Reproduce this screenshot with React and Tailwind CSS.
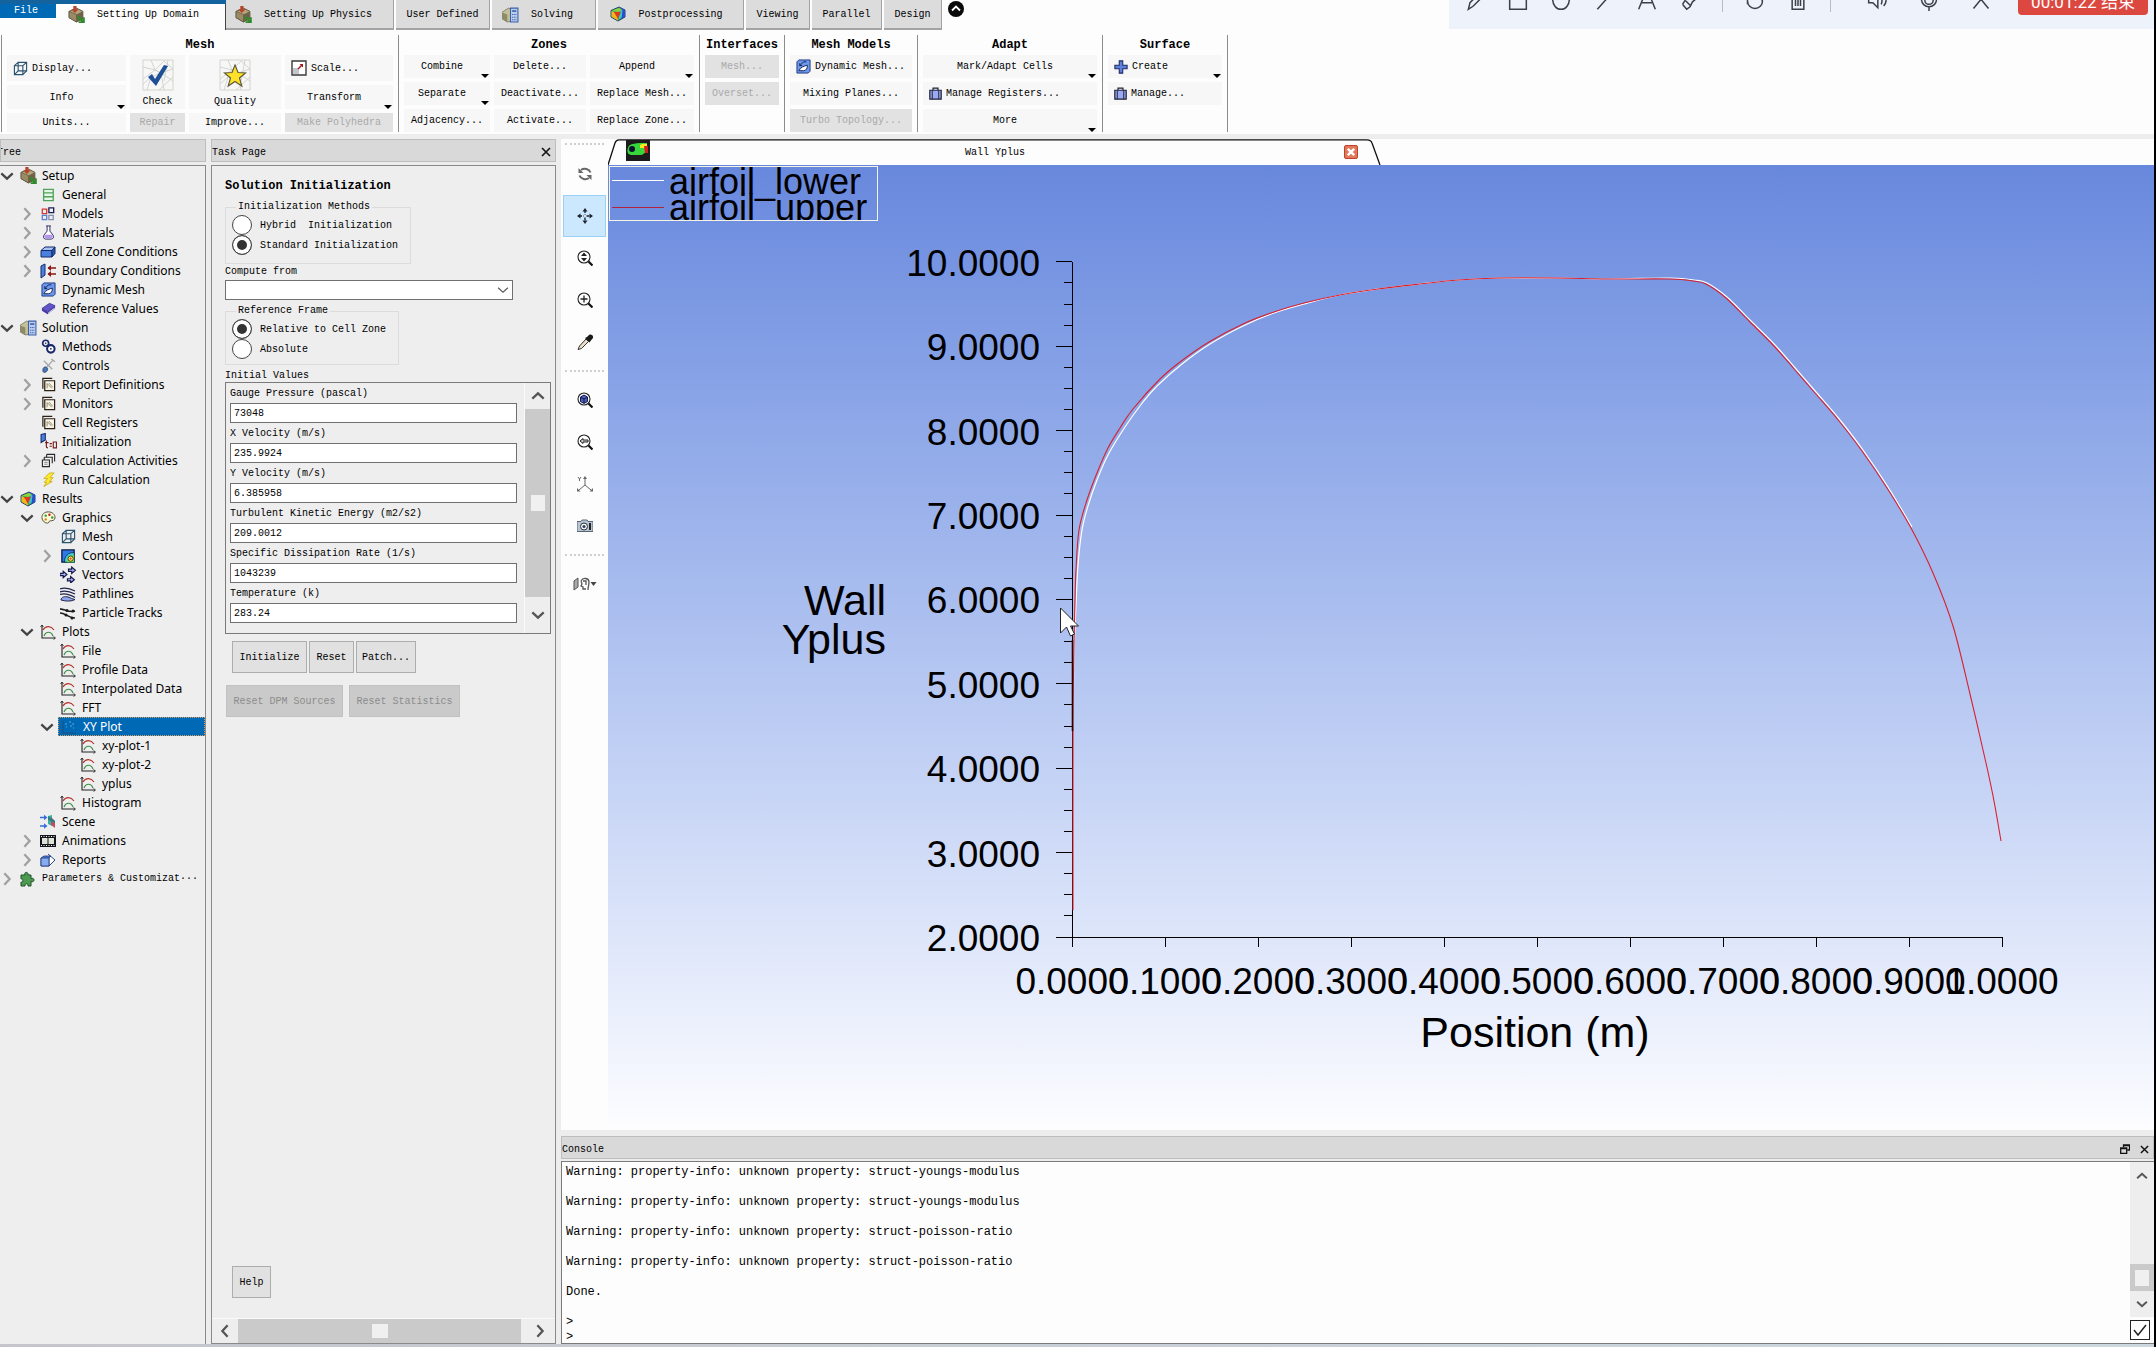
import React from "react";

const MONO = "font-['Liberation_Mono',monospace]";

/* ---------- icons ---------- */

function Svg({ size = 16, box = 16, className = "", children }) {
  return (
    <svg width={size} height={size} viewBox={`0 0 ${box} ${box}`} fill="none" className={`shrink-0 ${className}`} aria-hidden="true">
      {children}
    </svg>
  );
}

const SetupIcon = ({ size = 17 }) => (
  <Svg size={size}>
    <path d="M1 5l7-3 6 3v7l-6 3-7-4z" fill="#b5a47c" stroke="#4b4534" strokeWidth=".8" />
    <path d="M8 8l6-3v7l-6 3z" fill="#6e6347" />
    <path d="M1 5l7 3v7l-7-4z" fill="#9a8b66" stroke="#4b4534" strokeWidth=".5" />
    <path d="M5 0h3v3h2L6.500 6.500 3 3h2z" fill="#b5442c" />
    <path d="M10 9l4 4v-2.500h1.800V16H10v-1.600h2.300L8.800 11z" fill="#2f8a2c" />
  </Svg>
);
const SolutionIcon = ({ size = 17 }) => (
  <Svg size={size}>
    <path d="M0 6l6-4 5 2v10l-6 1-5-3z" fill="#c3c199" stroke="#6d6c55" strokeWidth=".7" />
    <path d="M0 6l5 2v7l-5-3z" fill="#8d8b68" />
    <path d="M8 2h7v13H8z" fill="#b9cdee" stroke="#3c5fa8" />
    <path d="M9.500 4h4v1.500h-4z" fill="#3c5fa8" />
    <path d="M9.500 8h4M9.500 10.500h4M9.500 13h4" stroke="#3c5fa8" strokeDasharray="1 .6" />
  </Svg>
);
const ResultsIcon = ({ size = 16 }) => (
  <Svg size={size}>
    <path d="M1 4.500L9 1l6 3v7l-7 4-7-4z" fill="#2fb457" stroke="#1a2f66" strokeWidth=".9" />
    <path d="M9 1l6 3v7l-4 2.300L12 5z" fill="#2450cf" />
    <path d="M8.500 3l4 1.500-1 7L9 13z" fill="#38c8c8" />
    <path d="M1.500 5L8 8v6.500l-6.500-3.800z" fill="#f1b51e" />
    <path d="M4 6l7-.5L8 13z" fill="#dc3a1d" />
    <path d="M2 4.500L9 2l3 1.500L8 6z" fill="#8ed23c" />
  </Svg>
);
const GeneralIcon = () => (
  <Svg size={14}>
    <path d="M3 1.500h11v13H3zM3 5.500h11M3 10h11" stroke="#4fa35a" strokeWidth="1.500" fill="#e6f5e7" />
  </Svg>
);
const ModelsIcon = () => (
  <Svg size={14}>
    <path d="M1.500 2.500h5v5h-5z" stroke="#d43a35" strokeWidth="1.500" />
    <path d="M9 1h5.500v5.500H9z" stroke="#1c1c55" strokeWidth="1.500" />
    <path d="M1.500 9.500h5v5h-5z" stroke="#5d7fd0" strokeWidth="1.500" />
    <path d="M9 9.500h5v5H9z" stroke="#8a8fb0" strokeWidth="1.500" />
  </Svg>
);
const MaterialsIcon = () => (
  <Svg size={15}>
    <path d="M5.500 1h5M6.500 1v5.500L3 11c-1 2 0 4 2 4h6c2 0 3-2 2-4L9.500 6.500V1" fill="#fff" stroke="#24245f" />
    <path d="M4 10.500h8c1 2 .5 3.500-1 3.500H5c-1.500 0-2-1.500-1-3.500z" fill="#b497ec" />
  </Svg>
);
const CellZoneIcon = () => (
  <Svg size={16}>
    <path d="M1 6.500L5 3h10l-3 3.500z" fill="#a5c3f5" stroke="#142a6b" />
    <path d="M1 6.500h11V13H1z" fill="#4b80dd" stroke="#142a6b" />
    <path d="M12 6.500L15 3v6.500L12 13z" fill="#2c56b0" stroke="#142a6b" />
  </Svg>
);
const BoundaryIcon = () => (
  <Svg size={16}>
    <path d="M1 3l4-2v11l-4 3z" fill="#4b80dd" stroke="#142a6b" />
    <path d="M8 5h8M8 11h8" stroke="#8a1616" strokeWidth="1.500" />
    <path d="M11 2L7.500 5 11 8zM11 8l-3.500 3 3.500 3z" fill="#8a1616" />
  </Svg>
);
const DynMeshIcon = () => (
  <Svg size={15}>
    <path d="M1 3l2-2h12v12l-2 2H1z" fill="#6d97ec" stroke="#1b357f" />
    <path d="M4 7l4-4h3M4 7V4.500M4 7h2.500" stroke="#102050" />
    <path d="M3 12.500C5 8.500 8 8 12 6.500c.5 3-1 6-4 6z" fill="#fff" stroke="#102050" />
  </Svg>
);
const BookIcon = () => (
  <Svg size={15}>
    <path d="M1 8l8-5.500L15 5l-8 6.500z" fill="#6355c8" stroke="#33308c" strokeWidth=".8" />
    <path d="M1 8l6 3.500L15 5v3l-8 6-6-3.500z" fill="#4438a4" />
    <path d="M7.500 12.500l7-5.500v1.200l-7 5.300z" fill="#e8e8f4" />
  </Svg>
);
const GearsIcon = () => (
  <Svg size={15}>
    <circle cx="5" cy="4.500" r="3.200" stroke="#18286b" strokeWidth="1.800" />
    <circle cx="10.500" cy="10.500" r="4" stroke="#18286b" strokeWidth="2.200" fill="#fff" />
    <circle cx="10.500" cy="10.500" r="1" fill="#18286b" />
    <circle cx="5" cy="4.500" r=".8" fill="#18286b" />
  </Svg>
);
const ControlsIcon = () => (
  <Svg size={15}>
    <path d="M3 3l9 9M13 2L6 10M11 1l4 3" stroke="#a5a9ad" strokeWidth="1.500" />
    <path d="M2 13c0-3 2-4 4-3s1 4-1 5-3 0-3-2z" fill="#4c79b5" stroke="#2c4a78" />
  </Svg>
);
const ReportDefIcon = () => (
  <Svg size={15}>
    <path d="M2 12.500V1.500h10" stroke="#2b2114" strokeWidth="1.300" />
    <path d="M4 4h10.500v10.500H4z" stroke="#2b2114" strokeWidth="1.300" fill="#f8f5ea" />
    <path d="M6.500 12V7l5 5M8.500 6.500l4 4.500" stroke="#8f855f" />
  </Svg>
);
const InitIcon = () => (
  <Svg size={17}>
    <path d="M1 1.500L5 .5v6L1 9z" fill="#4b80dd" stroke="#142a6b" />
    <path d="M6 7v6c0 1 .8 1 1.500 1M4.800 9H8M9 10h2.200M9 12.500h2.200M12.500 8.500h3V14h-3z" stroke="#7b1d1d" strokeWidth="1.100" />
  </Svg>
);
const CalcActIcon = () => (
  <Svg size={15}>
    <path d="M6 1.500h8.500V9M6 1.500V4M3.500 4.500H12V11M3.500 4.500V7M1.500 7.500H9v7H1.500z" stroke="#2b2b2b" strokeWidth="1.200" />
    <path d="M3.500 10h3.500M3.500 12h3.500" stroke="#8a8a8a" />
  </Svg>
);
const BoltIcon = () => (
  <Svg size={15}>
    <path d="M9 1h5L9.500 6H13l-4 4h3L3 15.500l3-4.500H3.500L7 7H3z" fill="#ffe92e" stroke="#b59b00" strokeWidth=".7" />
  </Svg>
);
const PaletteIcon = () => (
  <Svg size={15}>
    <path d="M8 2C3.500 2 1 4.500 1 8s3 6 6 6c2 0 1-2.500 3-2.500S15 11 15 8s-3-6-7-6z" fill="#fdfbd7" stroke="#4b4433" />
    <circle cx="5" cy="6" r="1.300" fill="#2f9a3a" />
    <circle cx="9" cy="5" r="1.300" fill="#c22222" />
    <circle cx="12" cy="8" r="1.300" fill="#2a9a2a" />
    <circle cx="5" cy="10" r="1.300" fill="#d8861a" />
  </Svg>
);
const MeshIcon = ({ size = 15 }) => (
  <Svg size={size}>
    <path d="M1.500 5h9v9.500h-9zM5.500 1.500h9v9h-9zM1.500 5l4-3.500M10.500 5l4-3.500M10.500 14.500l4-4M1.500 14.500l4-4" stroke="#2a5470" strokeWidth="1.200" />
  </Svg>
);
const ContoursIcon = () => (
  <Svg size={14}>
    <path d="M1 1h14v14H1z" fill="#2f78e8" stroke="#101a40" strokeWidth="1.500" />
    <path d="M4 15C4 8 8 4 15 4v11z" fill="#3fd2d8" stroke="#101a40" strokeWidth=".8" />
    <path d="M6.500 15c0-5 3-8 8.500-8v8z" fill="#70d64a" />
    <circle cx="11" cy="11" r="3" fill="#fff27a" stroke="#3a2a00" />
    <circle cx="11" cy="11" r="1.200" fill="#e1401b" />
  </Svg>
);
const VectorsIcon = () => (
  <Svg size={17}>
    <path d="M0 7h3V5l3.500 3L3 11V9H0zM8 3h3V1l3.500 3L11 7V5H8zM7 12h3v-2l3.500 3-3.500 3v-2H7z" fill="#a9b6ef" stroke="#17174c" strokeWidth="1.100" />
  </Svg>
);
const PathlinesIcon = () => (
  <Svg size={16}>
    <path d="M0 3c5-2 9-1 15 2M0 6c5-2 9-1 15 2M0 8.500c4-1.500 9-.5 15 3" stroke="#20244c" strokeWidth="1.200" />
    <path d="M1 14c0-3 4-4 7-3s4 2 7 2.500c-3 2-9 2-14 .5z" fill="#90a5ea" stroke="#20244c" />
  </Svg>
);
const TracksIcon = () => (
  <Svg size={16}>
    <path d="M0 4c5 0 9 4 15 2M0 8c5 0 9 5 15 5M0 4l5 1" stroke="#1a1a1a" strokeWidth="1.400" />
    <circle cx="7" cy="5.500" r="1.500" fill="#1a1a1a" />
    <circle cx="13" cy="6" r="1.500" fill="#1a1a1a" />
    <circle cx="6" cy="10" r="1.500" fill="#1a1a1a" />
    <circle cx="12" cy="13" r="1.500" fill="#1a1a1a" />
  </Svg>
);
const PlotIcon = () => (
  <Svg size={16}>
    <path d="M2 1v13h13" stroke="#222" strokeWidth="1.100" />
    <path d="M.5 3L2 1l1.500 2M13.500 12.500L15.500 14l-2 1.500" stroke="#222" strokeWidth=".8" />
    <path d="M3 6c3-5 8-4 11 0" stroke="#b5352c" strokeWidth="1.200" />
    <path d="M4 12c2-5 7-5 9 0" stroke="#3c8f45" strokeWidth="1.200" />
  </Svg>
);
const PlotSelectedIcon = () => (
  <Svg size={16}>
    <path d="M2 2v12h13" stroke="#1f4f80" strokeWidth="1.100" />
    <path d="M4 5h2M8 3h2M11 5h2M5 8h1M9 7h2M12 9h1" stroke="#3f93cf" strokeWidth="1.500" />
  </Svg>
);
const SceneIcon = () => (
  <Svg size={16}>
    <path d="M0 3.500h5M0 12h5" stroke="#3670d8" strokeWidth="1.600" />
    <path d="M4 .8L7.500 3.500 4 6.200zM4 9.300L7.500 12 4 14.700z" fill="#3670d8" />
    <path d="M8 2l4-1v11l-4-2z" fill="#33b3a6" />
    <path d="M11 3l4 4v7l-4-3z" fill="#c24b63" />
    <path d="M8 2l7 5v2L8 6z" fill="#2d7f83" />
  </Svg>
);
const FilmIcon = () => (
  <Svg size={16}>
    <path d="M0 2h16v12H0z" fill="#15151d" />
    <path d="M2 5h5.500v6H2zM8.500 5H14v6H8.500z" fill="#dfe6d9" />
    <path d="M1 3.500h14M1 12.500h14" stroke="#fff" strokeDasharray="1 1.500" />
  </Svg>
);
const ReportsIcon = () => (
  <Svg size={16}>
    <path d="M8 2l7 6-6 6" fill="#fff" stroke="#30457f" />
    <path d="M1 6l3-2h7l-2 2v8H1z" fill="#4b80dd" stroke="#1b3475" strokeWidth=".8" />
    <path d="M1 6h8v8H1z" fill="#87abf0" stroke="#1b3475" strokeWidth=".8" />
  </Svg>
);
const PuzzleIcon = () => (
  <Svg size={16}>
    <path d="M1 4h4c-1.500-3.500 4-3.500 3 0h3v3.500c4-1.500 4 4.500 0 3V15H8c.5-3-3.500-3-3 0H1v-4c2.500 1 2.500-4 0-3z" fill="#4d9a52" stroke="#1f5225" />
  </Svg>
);
const ScaleIcon = () => (
  <Svg size={16}>
    <path d="M1 1h14v14H1z" fill="#fff" stroke="#3a3a3a" strokeWidth="1.400" />
    <path d="M2 8h6v6H2z" fill="#c4c4cc" />
    <path d="M7 9l4-4" stroke="#a01818" strokeWidth="1.500" />
    <path d="M8.500 4H12v3.500z" fill="#a01818" />
  </Svg>
);
const BagIcon = () => (
  <Svg size={13}>
    <path d="M5 4V1.500h6V4" stroke="#1d2238" strokeWidth="1.500" />
    <path d="M1 4h14v11H1z" fill="#9ba9f0" stroke="#1d2238" strokeWidth="1.500" />
    <path d="M4 4v11M12 4v11" stroke="#1d2238" strokeWidth="1.200" />
  </Svg>
);
const PlusIcon = () => (
  <Svg size={14}>
    <path d="M6 1h4v5h5v4h-5v5H6v-5H1V6h5z" fill="#5f7fdc" stroke="#1d2b60" strokeWidth="1.200" />
  </Svg>
);
const MeshBack = () => (
  <path d="M1 1h30v30H1zM1 8l12 3L9 1M13 11l9-9 9 8-12 4zM1 20l12-9 6 3 12 8M5 31l4-13 10-4 3 17M1 25l8-7M31 18L17 31M26 1l-4 21" stroke="#cfcfca" strokeWidth=".9" />
);
const CheckIcon = () => (
  <Svg size={32} box={32}>
    <MeshBack />
    <path d="M6 18l4-3 3 5L22 6l4 1-12 20z" fill="#1f4f96" />
  </Svg>
);
const QualityIcon = () => (
  <Svg size={32} box={32}>
    <MeshBack />
    <path d="M16 6l3 7.500 7.500.5-6 5 2.300 8L16 22.500 9.200 27l2.300-8-6-5 7.500-.5z" fill="#ffe228" stroke="#5e5a3a" strokeWidth="1.200" />
  </Svg>
);
const CloseGlyph = ({ size = 10 }) => (
  <Svg size={size} box={10}>
    <path d="M1 1l8 8M9 1L1 9" stroke="#111" strokeWidth="1.600" />
  </Svg>
);
function Chevron({ dir, color = "#555", size = 14, weight = 2.6 }) {
  const d = {
    right: "M5 1.500L11 8l-6 6.500",
    left: "M11 1.500L5 8l6 6.500",
    down: "M1.500 5L8 11l6.500-6",
    up: "M1.500 11L8 5l6.500 6",
  }[dir];
  return (
    <Svg size={size}>
      <path d={d} stroke={color} strokeWidth={weight} />
    </Svg>
  );
}

/* ---------- ribbon ---------- */

function Tab({ icon, label, width }) {
  return (
    <button className={`flex h-[30px] shrink-0 items-center justify-center gap-3 border-r border-b-2 border-[#a3a3a3] bg-[#dcdcdc] ${width}`}>
      {icon}
      {label}
    </button>
  );
}

function RBtn({ icon, label, caret, disabled, className = "h-[23px]", left }) {
  return (
    <button
      disabled={disabled}
      className={`relative flex w-full items-center gap-1 whitespace-nowrap ${left ? "justify-start pl-1.5" : "justify-center"} ${disabled ? "bg-[#e2e2e3] text-[#a9a9a9]" : "bg-[#f7f7f7] text-black"} ${className}`}
    >
      {icon}
      <span className={caret && !left ? "pr-2.5" : ""}>{label}</span>
      {caret && (
        <span className="absolute right-[1px] bottom-0 border-x-4 border-t-4 border-x-transparent border-t-black" />
      )}
    </button>
  );
}

function Group({ title, children }) {
  return (
    <section className="flex h-[97px] shrink-0 flex-col border-r border-[#8c8c8c] px-[5px]">
      <h2 className="h-5 text-center text-[12px] leading-5 font-bold">{title}</h2>
      <div className="flex gap-1">{children}</div>
    </section>
  );
}

const Col = ({ width, children }) => <div className={`flex flex-col gap-1 ${width}`}>{children}</div>;

function Ribbon() {
  return (
    <header className="relative h-[134px] shrink-0 bg-[#fdfdfd]">
      <nav className="flex h-[30px] items-start gap-0.5">
        <div className="-mr-0.5 flex items-start border-t-4 border-[#14639f] bg-[#fdfdfd]">
          <button className="h-[14px] w-[56px] bg-[#0069b5] pr-1 text-[10px] leading-[10px] text-white">File</button>
          <button className="flex h-[26px] w-[170px] items-center gap-3 border-r border-[#444] pb-1.5 pl-3">
            <SetupIcon />
            Setting Up Domain
          </button>
        </div>
        <Tab icon={<SetupIcon />} label="Setting Up Physics" width="w-[168px] pr-3" />
        <Tab label="User Defined" width="w-[94px]" />
        <Tab icon={<SolutionIcon />} label="Solving" width="w-[104px] pr-3" />
        <Tab icon={<ResultsIcon />} label="Postprocessing" width="w-[146px] pr-2" />
        <Tab label="Viewing" width="w-[64px]" />
        <Tab label="Parallel" width="w-[70px]" />
        <Tab label="Design" width="w-[58px]" />
        <button aria-label="Collapse ribbon" className="ml-1 pt-px">
          <Svg size={16}>
            <circle cx="8" cy="8" r="8" fill="#0a0a0a" />
            <path d="M4 9.500l4-4 4 4" stroke="#fff" strokeWidth="1.800" />
          </Svg>
        </button>
      </nav>

      <div className="mt-[5px] ml-px flex border-l border-[#8c8c8c]">
        <Group title="Mesh">
          <Col width="w-[119px]">
            <RBtn left icon={<MeshIcon />} label="Display..." className="h-[26px]" />
            <RBtn caret label="Info" className="h-[24px]" />
            <RBtn label="Units..." className="h-[19px]" />
          </Col>
          <Col width="w-[55px]">
            <button className="flex h-[54px] flex-col items-center justify-between bg-[#f7f7f7] pt-1">
              <CheckIcon />
              <span>Check</span>
            </button>
            <RBtn disabled label="Repair" className="h-[19px]" />
          </Col>
          <Col width="w-[92px]">
            <button className="flex h-[54px] flex-col items-center justify-between bg-[#f7f7f7] pt-1">
              <QualityIcon />
              <span>Quality</span>
            </button>
            <RBtn label="Improve..." className="h-[19px]" />
          </Col>
          <Col width="w-[108px]">
            <RBtn left icon={<ScaleIcon />} label="Scale..." className="h-[26px]" />
            <RBtn caret label="Transform" className="h-[24px]" />
            <RBtn disabled label="Make Polyhedra" className="h-[19px]" />
          </Col>
        </Group>
        <Group title="Zones">
          <Col width="w-[86px]">
            <RBtn caret label="Combine" />
            <RBtn caret label="Separate" />
            <RBtn label="Adjacency..." />
          </Col>
          <Col width="w-[92px]">
            <RBtn label="Delete..." />
            <RBtn label="Deactivate..." />
            <RBtn label="Activate..." />
          </Col>
          <Col width="w-[104px]">
            <RBtn caret label="Append" />
            <RBtn label="Replace Mesh..." />
            <RBtn label="Replace Zone..." />
          </Col>
        </Group>
        <Group title="Interfaces">
          <Col width="w-[74px]">
            <RBtn disabled label="Mesh..." />
            <RBtn disabled label="Overset..." />
          </Col>
        </Group>
        <Group title="Mesh Models">
          <Col width="w-[122px]">
            <RBtn left icon={<DynMeshIcon />} label="Dynamic Mesh..." />
            <RBtn label="Mixing Planes..." />
            <RBtn disabled label="Turbo Topology..." />
          </Col>
        </Group>
        <Group title="Adapt">
          <Col width="w-[174px]">
            <RBtn caret label="Mark/Adapt Cells" />
            <RBtn left icon={<BagIcon />} label="Manage Registers..." />
            <RBtn caret label="More" />
          </Col>
        </Group>
        <Group title="Surface">
          <Col width="w-[114px]">
            <RBtn left caret icon={<PlusIcon />} label="Create" />
            <RBtn left icon={<BagIcon />} label="Manage..." />
          </Col>
        </Group>
      </div>

      <RecorderBar />
    </header>
  );
}

/* Floating annotation bar of the screen recorder, partly above the window edge. */
function RecorderBar() {
  const tools = [
    ["Pen", "M4 20l2-8L18 0l4 4L10 16z"],
    ["Rectangle", "M2 0v20h20V0"],
    ["Ellipse", "M2 8a10 12 0 0 0 20 0V0M2 8V0"],
    ["Arrow", "M4 20L20 2V0M12 4L20 0"],
    ["Text", "M2 20L10 0h4l8 20M6 12h12"],
    ["Marker", "M3 14l5 6 4-3 3-6 6-5M3 14l4-6 6-6M7 10l6 6"],
  ];
  const after = [
    ["Undo", "M3 10a9 9 0 1 0 18 0L18 4M3 14V7"],
    ["Delete", "M5 2v18h14V2M9 6v10M12 6v10M15 6v10"],
  ];
  const last = [
    ["Speaker", "M2 8v4h5l6 6V0M17 6a9 9 0 0 1 0 8M21 4a9 9 0 0 1-1 12"],
    ["Microphone", "M7 0v9a5 5 0 0 0 10 0V0M3 8a9 9 0 0 0 18 0M12 17v5"],
    ["Collapse", "M3 19L12 8l9 11"],
  ];
  const tool = ([name, d]) => (
    <button key={name} aria-label={name} className="h-[12px] w-5">
      <svg width="20" height="12" viewBox="0 9 24 14" fill="none" aria-hidden="true">
        <path d={d} stroke="#3a4048" strokeWidth="1.800" />
      </svg>
    </button>
  );
  return (
    <div className="absolute top-0 right-0 flex h-[29px] w-[705px] items-start bg-[#eef2fa] pr-1.5 pl-4 text-[#333]">
      <div className="flex gap-[23px]">{tools.map(tool)}</div>
      <span className="mx-[22px] h-3 w-px bg-[#bbb]" />
      <div className="flex gap-[23px]">{after.map(tool)}</div>
      <span className="mr-9 ml-[22px] h-3 w-px bg-[#bbb]" />
      <div className="flex gap-8">{last.map(tool)}</div>
      <button className="ml-auto h-[15px] w-[130px] overflow-hidden rounded-b bg-[#dc4840] font-['Roboto','Noto_Sans_CJK_SC',sans-serif] text-[17px] text-white">
        <span className="-mt-3 block leading-4">00:01:22 结束</span>
      </button>
    </div>
  );
}

/* ---------- tree ---------- */

const TREE = [
  [0, "down", SetupIcon, "Setup"],
  [1, "", GeneralIcon, "General"],
  [1, "right", ModelsIcon, "Models"],
  [1, "right", MaterialsIcon, "Materials"],
  [1, "right", CellZoneIcon, "Cell Zone Conditions"],
  [1, "right", BoundaryIcon, "Boundary Conditions"],
  [1, "", DynMeshIcon, "Dynamic Mesh"],
  [1, "", BookIcon, "Reference Values"],
  [0, "down", SolutionIcon, "Solution"],
  [1, "", GearsIcon, "Methods"],
  [1, "", ControlsIcon, "Controls"],
  [1, "right", ReportDefIcon, "Report Definitions"],
  [1, "right", ReportDefIcon, "Monitors"],
  [1, "", ReportDefIcon, "Cell Registers"],
  [1, "", InitIcon, "Initialization"],
  [1, "right", CalcActIcon, "Calculation Activities"],
  [1, "", BoltIcon, "Run Calculation"],
  [0, "down", ResultsIcon, "Results"],
  [1, "down", PaletteIcon, "Graphics"],
  [2, "", MeshIcon, "Mesh"],
  [2, "right", ContoursIcon, "Contours"],
  [2, "", VectorsIcon, "Vectors"],
  [2, "", PathlinesIcon, "Pathlines"],
  [2, "", TracksIcon, "Particle Tracks"],
  [1, "down", PlotIcon, "Plots"],
  [2, "", PlotIcon, "File"],
  [2, "", PlotIcon, "Profile Data"],
  [2, "", PlotIcon, "Interpolated Data"],
  [2, "", PlotIcon, "FFT"],
  [2, "down", PlotSelectedIcon, "XY Plot"],
  [3, "", PlotIcon, "xy-plot-1"],
  [3, "", PlotIcon, "xy-plot-2"],
  [3, "", PlotIcon, "yplus"],
  [2, "", PlotIcon, "Histogram"],
  [1, "", SceneIcon, "Scene"],
  [1, "right", FilmIcon, "Animations"],
  [1, "right", ReportsIcon, "Reports"],
  [0, "right", PuzzleIcon, "Parameters & Customizat···"],
];
const INDENT = ["pl-0", "pl-5", "pl-10", "pl-[60px]"];

function TreePanel() {
  return (
    <aside className="flex w-[206px] shrink-0 flex-col">
      <PanelTitle title="Tree" cut />
      <ul className="mt-[3px] flex-1 border-t border-r border-[#8a8a8a] bg-[#eeeeee] font-['Noto_Sans',sans-serif] text-[12px]">
        {TREE.map(([depth, arrow, Icon, label], i) => {
          const selected = label === "XY Plot";
          const mono = i === TREE.length - 1;
          return (
            <li key={i} className={`flex h-[19px] items-center ${INDENT[depth]}`}>
              <span className="w-[18px] shrink-0">
                {arrow && <Chevron dir={arrow} color={arrow === "down" ? "#444" : "#a0a0a0"} />}
              </span>
              <span className={`flex h-[19px] flex-1 items-center gap-1 ${selected ? "border border-dotted border-[#d89a5a] bg-[#0069b5] text-white" : ""}`}>
                <span className="flex w-5 justify-center"><Icon /></span>
                <span className={`whitespace-nowrap ${mono ? "font-['Liberation_Mono',monospace] text-[10px]" : ""}`}>{label}</span>
              </span>
            </li>
          );
        })}
      </ul>
    </aside>
  );
}

function PanelTitle({ title, cut, children }) {
  return (
    <div className="flex h-[23px] shrink-0 items-center justify-between overflow-hidden border border-[#bdbdbd] bg-[#d9d9d9] pt-[3px] pr-1">
      <h2 className={cut ? "-ml-1" : ""}>{title}</h2>
      {children}
    </div>
  );
}

/* ---------- task page ---------- */

function Radio({ name, label, checked }) {
  return (
    <label className="flex h-5 items-center gap-2 whitespace-pre">
      <input
        type="radio"
        name={name}
        defaultChecked={checked}
        className="size-5 appearance-none rounded-full border border-[#444] bg-white checked:bg-[#333] checked:shadow-[inset_0_0_0_4px_white]"
      />
      {label}
    </label>
  );
}

const VALUES = [
  ["Gauge Pressure (pascal)", "73048"],
  ["X Velocity (m/s)", "235.9924"],
  ["Y Velocity (m/s)", "6.385958"],
  ["Turbulent Kinetic Energy (m2/s2)", "209.0012"],
  ["Specific Dissipation Rate (1/s)", "1043239"],
  ["Temperature (k)", "283.24"],
];

function Btn({ children, disabled, className = "" }) {
  return (
    <button
      disabled={disabled}
      className={`h-8 border ${disabled ? "border-[#c2c2c2] bg-[#cacaca] text-[#8c8c8c]" : "border-[#adadad] bg-[#e1e1e1] text-black"} ${className}`}
    >
      {children}
    </button>
  );
}

function TaskPage() {
  return (
    <section className="ml-[5px] flex w-[345px] shrink-0 flex-col">
      <PanelTitle title="Task Page">
        <button aria-label="Close task page"><CloseGlyph /></button>
      </PanelTitle>
      <div className="mt-[3px] flex flex-1 flex-col border border-[#8a8a8a] bg-[#eeeeee]">
        <div className="flex flex-1 flex-col pt-2.5 pr-1 pl-[13px]">
          <h1 className="h-5 text-[12px] leading-5 font-bold">Solution Initialization</h1>
          <fieldset className="mt-[3px] h-[65px] w-[186px] border border-[#dcdcdc] pl-1.5">
            <legend className="ml-1 h-4 px-0.5 leading-4">Initialization Methods</legend>
            <Radio name="method" label="Hybrid  Initialization" />
            <Radio name="method" label="Standard Initialization" checked />
          </fieldset>
          <label htmlFor="compute" className="h-4 leading-4">Compute from</label>
          <div className="relative h-5 w-[288px]">
            <select id="compute" className="h-5 w-full appearance-none border border-[#707070] bg-white">
              <option></option>
            </select>
            <span className="pointer-events-none absolute top-1 right-1"><Chevron dir="down" size={12} weight={1.4} /></span>
          </div>
          <fieldset className="mt-[3px] h-[62px] w-[174px] border border-[#dcdcdc] pl-1.5">
            <legend className="ml-1 h-4 px-0.5 leading-4">Reference Frame</legend>
            <Radio name="frame" label="Relative to Cell Zone" checked />
            <Radio name="frame" label="Absolute" />
          </fieldset>
          <h2 className="mt-[5px] h-3 leading-3">Initial Values</h2>
          <div className="flex h-[252px] border border-[#7a7a7a]">
            <div className="flex-1 pr-[7px] pl-1 pt-0.5">
              {VALUES.map(([label, value], i) => (
                <div key={label} className="h-10">
                  <label htmlFor={`v${i}`} className="block h-[18px] leading-[18px]">{label}</label>
                  <input id={`v${i}`} defaultValue={value} className="block h-5 w-full border border-[#707070] bg-white pl-[3px]" />
                </div>
              ))}
            </div>
            <div className="flex w-[26px] flex-col border-l border-[#fafafa]">
              <button aria-label="Scroll up" className="flex h-[26px] items-center justify-center"><Chevron dir="up" /></button>
              <div className="flex flex-1 items-center justify-center bg-[#cacaca]"><span className="h-4 w-3.5 bg-[#f0f0f0]" /></div>
              <button aria-label="Scroll down" className="flex h-9 items-center justify-center"><Chevron dir="down" /></button>
            </div>
          </div>
          <div className="mt-[7px] ml-[7px] flex gap-0.5">
            <Btn className="w-[75px]">Initialize</Btn>
            <Btn className="w-[45px]">Reset</Btn>
            <Btn className="w-[60px]">Patch...</Btn>
          </div>
          <div className="mt-3 ml-px flex gap-1.5">
            <Btn disabled className="w-[117px]">Reset DPM Sources</Btn>
            <Btn disabled className="w-[111px]">Reset Statistics</Btn>
          </div>
          <Btn className="mt-auto mb-5 ml-[7px] w-[39px]">Help</Btn>
        </div>
        <div className="flex h-[25px] border-t border-[#fafafa]">
          <button aria-label="Scroll left" className="flex w-[26px] items-center justify-center"><Chevron dir="left" /></button>
          <div className="flex flex-1 items-center justify-center bg-[#cacaca]"><span className="h-3.5 w-4 bg-[#f0f0f0]" /></div>
          <button aria-label="Scroll right" className="flex w-[34px] items-center justify-center pl-1"><Chevron dir="right" /></button>
        </div>
      </div>
    </section>
  );
}

/* ---------- view toolbar ---------- */

const Lens = ({ children }) => (
  <>
    <circle cx="7" cy="7" r="6" stroke="#222" strokeWidth="1.100" fill="#fff" />
    <path d="M11.500 11.500L15.500 15.500" stroke="#111" strokeWidth="2.200" />
    {children}
  </>
);

const VIEW_TOOLS = [
  "dots",
  ["Refresh", <><path d="M13.500 6.500A6 5.500 0 0 0 4 4M2.500 9.500A6 5.500 0 0 0 12 12" stroke="#666" strokeWidth="2" /><path d="M1.500 2v5H6.500zM14.500 14V9h-5z" fill="#666" /></>],
  ["Pan", <><path d="M8 2v4.500M8 9.500V14M2 8h4.500M9.500 8H14" stroke="#1d2430" strokeWidth="1.400" strokeDasharray="3 1" /><path d="M8 0l2.500 3.500h-5zM8 16l2.500-3.500h-5zM0 8l3.500-2.500v5zM16 8l-3.500-2.500v5z" fill="#1d2430" /></>],
  ["Zoom", <Lens><path d="M7 2.500l3 3.500H4zM7 11.500L10 8H4z" fill="#222" /></Lens>],
  ["Zoom in", <Lens><path d="M7 3.500v7M3.500 7h7" stroke="#222" strokeWidth="1.300" /></Lens>],
  ["Probe", <><path d="M9 5l2.500 2.500-7 7L1 15.500 2.500 12z" fill="#e7dfc8" stroke="#333" /><path d="M8 4l4.500 4.500 1-1.500L16 4c1-2-2-4.500-4-3L10 3z" fill="#1a1a1a" /></>],
  "dots",
  ["Fit to window", <Lens><path d="M3.500 5L7 3l3.500 2v4.500L7 11.500l-3.500-2z" fill="#4c5fb4" stroke="#111b50" /><path d="M7 7v4M4 5.500l3 1.500 3-1.500" stroke="#111b50" /></Lens>],
  ["Previous view", <Lens><path d="M3 7l3-2.500V6h5v2H6v1.500z" stroke="#222" fill="#ccc" /></Lens>],
  ["Axes", <><path d="M8 9V2M8 9l-6 5M8 9l6 5M1 1l1.500 2L4 1M2.500 3v2" stroke="#666" /><path d="M8 0l2 3H6zM0 15.500V12l3.500 3.500zM16 15.500V12l-3.500 3.500z" fill="#666" /></>],
  ["Snapshot", <><path d="M0 3.500h4L5 2h5l1 1.500h5v10H0z" fill="#b5c5d5" stroke="#5b6673" /><circle cx="7" cy="8.500" r="3.500" fill="#f0f4f8" stroke="#333" /><circle cx="7" cy="8.500" r="1.500" fill="#2a3c55" /><path d="M13 5v7" stroke="#222" strokeWidth="2" /></>],
  "dots",
];

function ViewToolbar() {
  return (
    <div className="ml-[5px] flex w-[47px] shrink-0 flex-col items-stretch bg-[#fdfdfd] px-0.5 pt-1">
      {VIEW_TOOLS.map((t, i) =>
        t === "dots" ? (
          <span key={i} className={`mx-0.5 shrink-0 border-t-2 border-dotted border-[#cfcfcf] ${i === 0 ? "mb-2" : "my-[7px]"}`} />
        ) : (
          <button
            key={i}
            aria-label={t[0]}
            className={`flex h-[42px] shrink-0 items-center justify-center border ${t[0] === "Pan" ? "border-[#99d1f5] bg-[#cce8ff]" : "border-transparent"}`}
          >
            <Svg size={16}>{t[1]}</Svg>
          </button>
        )
      )}
      <button aria-label="Display options" className="flex h-[42px] items-center justify-center">
        <svg width="24" height="14" viewBox="0 0 24 14" fill="none" aria-hidden="true">
          <path d="M1 4l4-3v9l-4 3z" fill="#aaa" stroke="#555" />
          <path d="M8 4c2-4 8-3 8 1s-1 4-1 8M8 4l1 3-1 2 2 1v2h3M10 4h3v4" stroke="#555" strokeWidth="1.300" />
          <path d="M17.500 5h6L20.500 9z" fill="#444" />
        </svg>
      </button>
    </div>
  );
}

/* ---------- plot ---------- */

const X0 = 464;
const Y0 = 772;
const XS = 93;
const YS = 84.4;

const TAIL = [
  [770, 124], [812, 119], [850, 115], [891, 113], [950, 113], [1000, 114], [1062, 114], [1085, 116], [1098, 119], [1118, 133],
  [1142, 157], [1166, 181], [1187, 205], [1207, 228], [1231, 256], [1254, 286], [1279, 323], [1303, 363], [1325, 408],
  [1345, 461], [1362, 529], [1378, 598], [1386, 636], [1393, 676],
];
const UPPER = [
  [465, 745], [465, 560], [466, 480], [467, 435], [468, 405], [471, 365], [479, 335], [489, 308], [500, 283], [512, 263],
  [525, 244], [552, 214], [572, 197], [601, 177], [635, 159], [666, 147], [696, 138], [732, 130], ...TAIL,
];
const LOWER = [
  [465, 560], [466, 490], [468, 440], [470, 400], [474, 365], [480, 341], [489, 315], [500, 290], [517, 262], [535, 237],
  [549, 221], [574, 199], [602, 179], [635, 161], [666, 148], [696, 139], [732, 130],
  ...TAIL.slice(0, 18).map(([x, y], i) => (i > 5 ? [x + 1, y - 1] : [x, y])),
];

/* Smooth path through the points (Catmull-Rom turned into Bezier segments). */
function smooth(pts) {
  let d = `M${pts[0][0]} ${pts[0][1]}`;
  for (let i = 0; i < pts.length - 1; i++) {
    const a = pts[Math.max(i - 1, 0)];
    const b = pts[i];
    const c = pts[i + 1];
    const e = pts[Math.min(i + 2, pts.length - 1)];
    d += `C${b[0] + (c[0] - a[0]) / 6} ${b[1] + (c[1] - a[1]) / 6} ${c[0] - (e[0] - b[0]) / 6} ${c[1] - (e[1] - b[1]) / 6} ${c[0]} ${c[1]}`;
  }
  return d;
}

function Plot() {
  const yTicks = Array.from({ length: 33 }, (_, i) => i);
  const xTicks = Array.from({ length: 11 }, (_, i) => i);
  return (
    <div className="min-h-0 flex-1 bg-linear-to-b from-[#6888dd] to-[#fdfdff]">
      <svg
        viewBox="0 0 1546 965"
        preserveAspectRatio="xMinYMin meet"
        className="block h-full w-full font-['Liberation_Sans',Arial,sans-serif]"
        role="img"
        aria-label="Wall Yplus against Position"
      >
        <defs>
          <clipPath id="legend"><rect x="1" y="1" width="270" height="55" /></clipPath>
        </defs>
        <g clipPath="url(#legend)" fontSize="36">
          <text x="61" y="29">airfoil_lower</text>
          <text x="61" y="55">airfoil_upper</text>
        </g>
        <path d="M4 15.500h52" stroke="#fff" />
        <path d="M4 42.500h52" stroke="#b3223c" />
        <rect x="1.500" y="1.500" width="268" height="54" fill="none" stroke="#f4f4e6" />

        <g stroke="#000" strokeWidth="1" shapeRendering="crispEdges">
          <path d={`M${X0 + 0.5} 97V${Y0}M${X0 - 16} ${Y0 + 0.5}H${X0 + 930}`} fill="none" />
          {yTicks.map((i) => (
            <line key={i} x1={X0 - (i % 4 ? 8 : 16)} x2={X0} y1={Y0 - (i * YS) / 4} y2={Y0 - (i * YS) / 4} />
          ))}
          {xTicks.map((i) => (
            <line key={i} x1={X0 + i * XS} x2={X0 + i * XS} y1={Y0} y2={Y0 + 10} />
          ))}
        </g>
        <g fontSize="37" textAnchor="end">
          {Array.from({ length: 9 }, (_, i) => (
            <text key={i} x="432" y={Y0 - i * YS + 14}>{(i + 2).toFixed(4)}</text>
          ))}
        </g>
        <g fontSize="37" textAnchor="middle">
          {xTicks.map((i) => (
            <text key={i} x={X0 + i * XS} y="829">{(i / 10).toFixed(4)}</text>
          ))}
        </g>
        <text x="927" y="882" fontSize="43" textAnchor="middle">Position (m)</text>
        <g fontSize="43" textAnchor="end">
          <text x="278" y="450">Wall</text>
          <text x="278" y="489">Yplus</text>
        </g>
        <path d={smooth(LOWER)} fill="none" stroke="#fff" strokeWidth="1.200" />
        <path d={smooth(UPPER)} fill="none" stroke="#d8202f" strokeWidth="1.100" />
        <path d="M464.500 475v91" stroke="#220808" strokeWidth="1.600" />
        <path d="M452.500 443v25l6-6 4 9 4-2-4-8h8z" fill="#fff" stroke="#222" />
      </svg>
    </div>
  );
}

function GraphicsArea() {
  return (
    <main className="flex min-h-0 flex-1 flex-col">
      <div className="h-[26px] shrink-0 bg-[#fdfdfd]">
        <div className="relative flex h-full w-1/2 items-center">
          <svg className="absolute inset-0 h-full w-full" viewBox="0 0 773 26" preserveAspectRatio="none" fill="none" aria-hidden="true">
            <path d="M0 26L7 4Q8 .8 11 .8H759Q763 .8 764 4L772 26" stroke="#111" strokeWidth="1.300" />
          </svg>
          <svg className="relative mb-1 ml-[18px]" width="24" height="21" viewBox="0 0 24 21" aria-hidden="true">
            <path d="M0 0h24v21H0z" fill="#1b1b1b" />
            <path d="M2 8C3 3 11 3 21 3v9c-3 0-3 3-6 3H5c-4-1-4-4-3-7z" fill="#38d63a" />
            <path d="M14 5c3-2 5-1 7-1v4h-7z" fill="#f5ec22" />
            <path d="M18 6h4v7h-3z" fill="#d41c1c" />
            <circle cx="6" cy="9" r="3" fill="#0a1430" />
          </svg>
          <h2 className="relative flex-1 pr-1 text-center">Wall Yplus</h2>
          <button aria-label="Close tab" className="relative mr-[23px] flex size-[14px] items-center justify-center rounded-[2px] border border-[#c0402a] bg-[#e0785a]">
            <Svg size={8} box={10}>
              <path d="M1 1l8 8M9 1L1 9" stroke="#fff" strokeWidth="3" />
            </Svg>
          </button>
        </div>
      </div>
      <Plot />
    </main>
  );
}

/* ---------- console ---------- */

const LOG = [
  "Warning: property-info: unknown property: struct-youngs-modulus",
  "",
  "Warning: property-info: unknown property: struct-youngs-modulus",
  "",
  "Warning: property-info: unknown property: struct-poisson-ratio",
  "",
  "Warning: property-info: unknown property: struct-poisson-ratio",
  "",
  "Done.",
  "",
  ">",
  ">",
].join("\n");

function Console() {
  return (
    <section className="mt-1.5 shrink-0">
      <PanelTitle title="Console">
        <div className="flex items-center gap-2.5">
          <button aria-label="Float console">
            <Svg size={10} box={10}>
              <path d="M3.500 3V1h6v5h-2M3.500 1.500h6M.7 4h6v5.300h-6zM.7 4.500h6" stroke="#111" strokeWidth="1.300" />
            </Svg>
          </button>
          <button aria-label="Close console"><CloseGlyph size={9} /></button>
        </div>
      </PanelTitle>
      <div className="mt-0.5 flex border border-r-0 border-[#7a7a7a] bg-[#fdfdfd]">
        <pre className={`h-[181px] flex-1 overflow-hidden pt-[3px] pl-1 text-[12px] leading-[15px] ${MONO}`}>{LOG}</pre>
        <div className="flex w-6 flex-col items-center">
          <div className="flex w-full flex-1 flex-col items-center bg-[#eeeeee]">
            <button aria-label="Scroll up" className="mt-2 flex"><Chevron dir="up" size={12} /></button>
            <div className="mt-auto flex h-[27px] w-full items-center justify-center bg-[#cacaca]"><span className="h-4 w-3.5 bg-[#f0f0f0]" /></div>
            <button aria-label="Scroll down" className="my-[7px] flex"><Chevron dir="down" size={12} /></button>
          </div>
          <label className="relative my-[3px] mr-1 flex size-5">
            <input type="checkbox" defaultChecked aria-label="Show console" className="size-5 appearance-none border border-[#222] bg-white" />
            <Svg size={16} className="pointer-events-none absolute top-0.5 left-0.5">
              <path d="M2 8l4 5L14 3" stroke="#222" strokeWidth="1.500" />
            </Svg>
          </label>
        </div>
      </div>
    </section>
  );
}

export default function App() {
  return (
    <div className={`flex h-screen flex-col overflow-hidden border-r-2 border-black bg-[#ededed] text-[10px] text-black ${MONO}`}>
      <Ribbon />
      <div className="mt-[5px] flex min-h-0 flex-1">
        <TreePanel />
        <TaskPage />
        <div className="flex min-w-0 flex-1 flex-col">
          <div className="flex min-h-0 flex-1">
            <ViewToolbar />
            <GraphicsArea />
          </div>
          <div className="pl-[5px]"><Console /></div>
        </div>
      </div>
      <div className="h-[3px] shrink-0 bg-linear-to-r from-[#c5c5cb] to-[#ccd8e0]" />
    </div>
  );
}
